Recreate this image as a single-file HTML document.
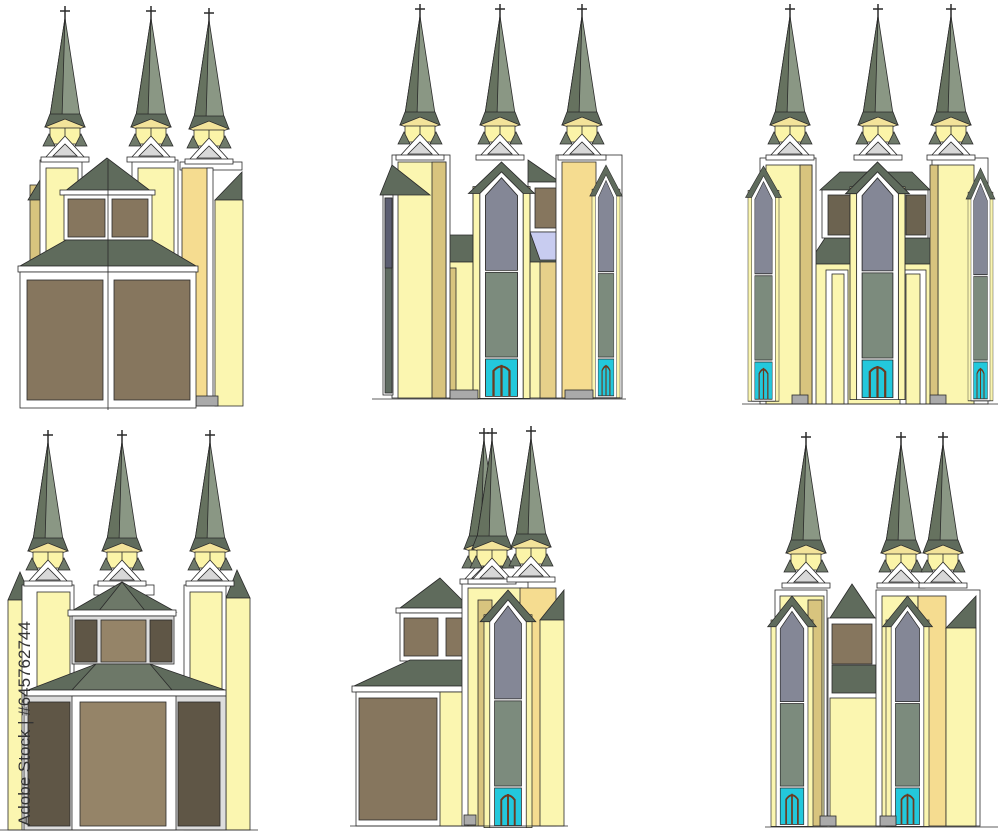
<!DOCTYPE html>
<html><head><meta charset="utf-8"><style>
html,body{margin:0;padding:0;background:#fff;}
svg{display:block;}
</style></head><body>
<svg width="1000" height="834" viewBox="0 0 1000 834" xmlns="http://www.w3.org/2000/svg" stroke="#2a2a2a" stroke-width="0.8">
<defs>
<symbol id="sp" overflow="visible">
  <line x1="0" y1="0" x2="0" y2="16" stroke-width="1.5"/>
  <line x1="-5" y1="5" x2="5" y2="5" stroke-width="1.5"/>
  <polygon points="0,12 -15,110 15,110" fill="#8a9784"/>
  <polygon points="0,12 -15,110 -3,112" fill="#66725f"/>
  <polygon points="-15,108 15,108 20,121 -20,121" fill="#5f6b5c"/>
  <polygon points="-20,121 0,113 20,121 0,127" fill="#f3e39a"/>
  <rect x="-15" y="122" width="30" height="16" fill="#fbf4a8"/>
  <line x1="0" y1="122" x2="0" y2="138"/>
  <polygon points="-22,140 -16,128 -10,140" fill="#6f7a6a"/>
  <polygon points="22,140 16,128 10,140" fill="#6f7a6a"/>
  <polygon points="-20,152 0,130 20,152" fill="#fff"/>
  <polygon points="-12,150 0,138 12,150" fill="#d8d8d8"/>
  <rect x="-24" y="151" width="48" height="5" fill="#fff"/>
</symbol>
<symbol id="lt" overflow="visible">
  <rect x="0" y="25" width="50" height="215" fill="#fbf6b0"/>
  <polygon points="-4,32 25,0 54,32" fill="#5f6b5c"/>
  <polygon points="6,240 6,32 25,10 44,32 44,240" fill="#fff"/>
  <polygon points="11,110 11,34 25,16 39,34 39,110" fill="#848796"/>
  <rect x="11" y="112" width="28" height="86" fill="#7c8b7d"/>
  <rect x="11" y="200" width="28" height="38" fill="#23c8dc"/>
  <path d="M18,238 V212 Q25,203 32,212 V238 M25,206 V238" fill="none" stroke="#6b3a20" stroke-width="2"/>
</symbol>
</defs>

<!-- ===== Church 1 ===== -->
<g>
  <rect x="30" y="185" width="14" height="222" fill="#d8c47e"/>
  <polygon points="28,200 40,180 44,200" fill="#5f6b5c"/>
  <rect x="40" y="160" width="42" height="246" fill="#fff"/>
  <rect x="46" y="168" width="32" height="238" fill="#fbf6b0"/>
  <rect x="132" y="160" width="46" height="246" fill="#fff"/>
  <rect x="138" y="168" width="36" height="238" fill="#fbf6b0"/>
  <rect x="180" y="162" width="62" height="8" fill="#fff"/>
  <rect x="182" y="168" width="30" height="236" fill="#f5dc90"/>
  <rect x="207" y="168" width="6" height="236" fill="#fff"/>
  <polygon points="215,200 242,172 242,200" fill="#5f6b5c"/>
  <rect x="215" y="200" width="28" height="206" fill="#fbf6b0"/>
  <rect x="196" y="396" width="22" height="10" fill="#aaa"/>
  <use href="#sp" x="65" y="6"/>
  <use href="#sp" x="151" y="6"/>
  <use href="#sp" x="209" y="8"/>
  <polygon points="107,158 64,192 152,192" fill="#5f6b5c"/>
  <rect x="60" y="190" width="95" height="5" fill="#fff"/>
  <rect x="64" y="195" width="88" height="45" fill="#fff"/>
  <rect x="68" y="199" width="37" height="38" fill="#86765e"/>
  <rect x="112" y="199" width="36" height="38" fill="#86765e"/>
  <polygon points="66,240 152,240 196,266 20,266" fill="#5f6b5c"/>
  <rect x="18" y="266" width="180" height="6" fill="#fff"/>
  <rect x="20" y="272" width="176" height="136" fill="#fff"/>
  <rect x="27" y="280" width="76" height="120" fill="#86765e"/>
  <rect x="114" y="280" width="76" height="120" fill="#86765e"/>
  <line x1="108" y1="160" x2="108" y2="410"/>
</g>

<!-- ===== Church 2 ===== -->
<g>
  <polygon points="440,262 448,235 540,235 560,262" fill="#5f6b5c"/>
  <rect x="440" y="262" width="120" height="136" fill="#fbf6b0"/>
  <rect x="446" y="268" width="10" height="130" fill="#d8c47e"/>
  <rect x="540" y="262" width="18" height="136" fill="#e6d08a"/>
  <polygon points="528,160 560,182 528,182" fill="#5f6b5c"/>
  <rect x="528" y="182" width="32" height="50" fill="#fff"/>
  <rect x="535" y="188" width="24" height="40" fill="#86765e"/>
  <polygon points="530,232 560,232 560,260 540,260" fill="#c8ccf0"/>
  <rect x="392" y="155" width="58" height="243" fill="#fff"/>
  <rect x="398" y="162" width="48" height="236" fill="#fbf6b0"/>
  <rect x="432" y="162" width="14" height="236" fill="#d8c47e"/>
  <polygon points="380,195 392,165 430,195" fill="#5f6b5c"/>
  <rect x="383" y="195" width="10" height="200" fill="#fff"/>
  <rect x="385" y="198" width="7" height="195" fill="#5e6a60"/>
  <rect x="385" y="198" width="7" height="70" fill="#5b5d70"/>
  <rect x="556" y="155" width="66" height="243" fill="#fff"/>
  <rect x="562" y="162" width="34" height="236" fill="#f5dc90"/>
  <use href="#sp" x="420" y="4"/>
  <use href="#sp" x="500" y="4"/>
  <use href="#sp" x="582" y="4"/>
  <g transform="translate(473,162) scale(1.14,0.985)"><use href="#lt"/></g>
  <g transform="translate(592,165) scale(0.56,0.97)"><use href="#lt"/></g>
  <rect x="450" y="390" width="28" height="9" fill="#aaa"/>
  <rect x="565" y="390" width="28" height="9" fill="#aaa"/>
  <line x1="372" y1="399" x2="626" y2="399"/>
</g>

<!-- ===== Church 3 ===== -->
<g>
  <polygon points="808,264 825,238 930,238 940,264" fill="#5f6b5c"/>
  <rect x="808" y="264" width="132" height="140" fill="#fbf6b0"/>
  <rect x="826" y="270" width="22" height="134" fill="#fff"/>
  <rect x="832" y="274" width="12" height="130" fill="#fbf6b0"/>
  <rect x="900" y="270" width="26" height="134" fill="#fff"/>
  <rect x="906" y="274" width="14" height="130" fill="#fbf6b0"/>
  <polygon points="820,190 840,172 912,172 930,190" fill="#5f6b5c"/>
  <rect x="822" y="190" width="106" height="48" fill="#fff"/>
  <rect x="828" y="195" width="22" height="40" fill="#6c6350"/>
  <rect x="906" y="195" width="20" height="40" fill="#6c6350"/>
  <rect x="760" y="158" width="56" height="246" fill="#fff"/>
  <rect x="766" y="165" width="46" height="239" fill="#fbf6b0"/>
  <rect x="800" y="165" width="12" height="239" fill="#d8c47e"/>
  <rect x="932" y="158" width="56" height="246" fill="#fff"/>
  <rect x="938" y="165" width="36" height="239" fill="#fbf6b0"/>
  <rect x="930" y="165" width="8" height="239" fill="#d8c47e"/>
  <use href="#sp" x="790" y="4"/>
  <use href="#sp" x="878" y="4"/>
  <use href="#sp" x="951" y="4"/>
  <g transform="translate(748,166) scale(0.62,0.98)"><use href="#lt"/></g>
  <g transform="translate(850,162) scale(1.1,0.99)"><use href="#lt"/></g>
  <g transform="translate(968,168) scale(0.5,0.97)"><use href="#lt"/></g>
  <rect x="792" y="395" width="16" height="9" fill="#aaa"/>
  <rect x="930" y="395" width="16" height="9" fill="#aaa"/>
  <line x1="742" y1="404" x2="998" y2="404"/>
</g>

<!-- ===== Church 4 ===== -->
<g>
  <polygon points="8,600 20,572 32,600" fill="#5f6b5c"/>
  <rect x="8" y="600" width="24" height="230" fill="#fbf6b0"/>
  <polygon points="226,598 237,570 250,598" fill="#5f6b5c"/>
  <rect x="226" y="598" width="24" height="232" fill="#fbf6b0"/>
  <rect x="22" y="585" width="52" height="245" fill="#fff"/>
  <rect x="37" y="592" width="33" height="238" fill="#fbf6b0"/>
  <rect x="184" y="585" width="42" height="245" fill="#fff"/>
  <rect x="190" y="592" width="32" height="238" fill="#fbf6b0"/>
  <rect x="94" y="585" width="60" height="10" fill="#fff"/>
  <use href="#sp" x="48" y="430"/>
  <use href="#sp" x="122" y="430"/>
  <use href="#sp" x="210" y="430"/>
  <polygon points="122,582 70,612 176,612" fill="#5f6b5c"/>
  <polygon points="122,582 98,612 146,612" fill="#6d7868"/>
  <rect x="68" y="610" width="108" height="6" fill="#fff"/>
  <rect x="72" y="616" width="102" height="48" fill="#ddd"/>
  <rect x="75" y="620" width="22" height="42" fill="#5f5646"/>
  <rect x="101" y="620" width="45" height="42" fill="#958468"/>
  <rect x="150" y="620" width="22" height="42" fill="#5f5646"/>
  <polygon points="96,664 150,664 225,690 28,690" fill="#5f6b5c"/>
  <polygon points="96,664 150,664 172,690 72,690" fill="#6d7868"/>
  <rect x="24" y="690" width="202" height="6" fill="#fff"/>
  <rect x="24" y="696" width="202" height="134" fill="#ddd"/>
  <rect x="72" y="696" width="104" height="134" fill="#fff"/>
  <rect x="28" y="702" width="42" height="124" fill="#5f5646"/>
  <rect x="80" y="702" width="86" height="124" fill="#958468"/>
  <rect x="178" y="702" width="42" height="124" fill="#5f5646"/>
  <line x1="0" y1="830" x2="258" y2="830"/>
  <text x="0" y="0" transform="translate(30,826) rotate(-90)" font-family="Liberation Sans, sans-serif" font-size="17" fill="#333" stroke="none">Adobe Stock | #645762744</text>
</g>

<!-- ===== Church 5 ===== -->
<g>
  <polygon points="440,578 400,608 470,608" fill="#5f6b5c"/>
  <rect x="396" y="608" width="76" height="5" fill="#fff"/>
  <rect x="400" y="613" width="70" height="48" fill="#fff"/>
  <rect x="404" y="618" width="34" height="38" fill="#86765e"/>
  <rect x="446" y="618" width="24" height="38" fill="#86765e"/>
  <polygon points="410,660 470,660 470,686 354,686" fill="#5f6b5c"/>
  <rect x="352" y="686" width="120" height="6" fill="#fff"/>
  <rect x="356" y="692" width="114" height="134" fill="#fff"/>
  <rect x="440" y="692" width="30" height="134" fill="#fbf6b0"/>
  <rect x="359" y="698" width="78" height="122" fill="#86765e"/>
  <rect x="462" y="582" width="66" height="244" fill="#fff"/>
  <rect x="468" y="588" width="54" height="238" fill="#fbf6b0"/>
  <rect x="478" y="600" width="14" height="226" fill="#d8c47e"/>
  <rect x="520" y="588" width="36" height="238" fill="#f5dc90"/>
  <polygon points="540,620 564,590 564,620" fill="#5f6b5c"/>
  <rect x="540" y="620" width="24" height="206" fill="#fbf6b0"/>
  <use href="#sp" x="484" y="428"/>
  <use href="#sp" x="492" y="428"/>
  <use href="#sp" x="531" y="426"/>
  <g transform="translate(484,590) scale(0.96,0.99)"><use href="#lt"/></g>
  <rect x="464" y="815" width="12" height="10" fill="#aaa"/>
  <line x1="350" y1="826" x2="568" y2="826"/>
</g>

<!-- ===== Church 6 ===== -->
<g>
  <polygon points="830,618 852,584 875,618" fill="#5f6b5c"/>
  <rect x="828" y="618" width="52" height="200" fill="#fff"/>
  <rect x="832" y="624" width="40" height="40" fill="#86765e"/>
  <rect x="832" y="665" width="44" height="28" fill="#5f6b5c"/>
  <rect x="830" y="698" width="50" height="128" fill="#fbf6b0"/>
  <rect x="775" y="590" width="52" height="236" fill="#fff"/>
  <rect x="780" y="596" width="44" height="230" fill="#fbf6b0"/>
  <rect x="808" y="600" width="14" height="226" fill="#d8c47e"/>
  <rect x="876" y="590" width="104" height="236" fill="#fff"/>
  <rect x="882" y="596" width="36" height="230" fill="#fbf6b0"/>
  <rect x="918" y="596" width="28" height="230" fill="#f5dc90"/>
  <polygon points="946,628 976,596 976,628" fill="#5f6b5c"/>
  <rect x="946" y="628" width="30" height="198" fill="#fbf6b0"/>
  <use href="#sp" x="806" y="432"/>
  <use href="#sp" x="901" y="432"/>
  <use href="#sp" x="943" y="432"/>
  <g transform="translate(771,596) scale(0.84,0.96)"><use href="#lt"/></g>
  <g transform="translate(886,596) scale(0.86,0.96)"><use href="#lt"/></g>
  <rect x="820" y="816" width="16" height="10" fill="#aaa"/>
  <rect x="880" y="816" width="16" height="10" fill="#aaa"/>
  <line x1="765" y1="827" x2="998" y2="827"/>
</g>
</svg>
</body></html>
